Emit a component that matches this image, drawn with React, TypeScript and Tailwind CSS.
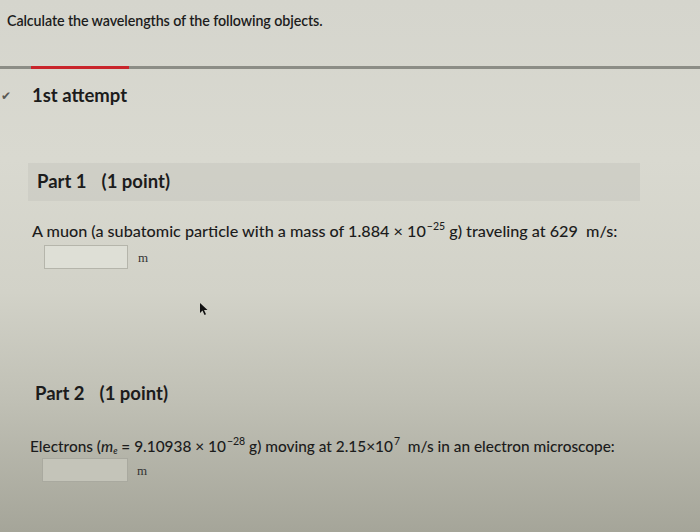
import React from "react";

function Sup({ children }: { children: React.ReactNode }) {
  return <sup className="text-[10.5px] relative -top-[7px] align-baseline ml-[1px]">{children}</sup>;
}

export default function App() {
  return (
    <div
      className="w-[700px] h-[532px] overflow-hidden text-[#1c1c1c] bg-[linear-gradient(180deg,#d5d5cd_0%,#d9d9d0_30%,#d2d2c8_55%,#c0c0b5_75%,#a5a599_100%)]"
      style={{ fontFamily: "Lato, 'Open Sans', sans-serif" }}
    >
      <div className="pl-[7px] pt-[10px] text-[14.3px] font-semibold tracking-[-0.1px]">
        Calculate the wavelengths of the following objects.
      </div>

      <div className="mt-[35px] flex h-[3px] w-full bg-[#8c8d86]">
        <div className="ml-[31px] w-[98px] bg-[#c9252b]" />
      </div>

      <div className="mt-[13px] flex items-center">
        <span className="w-[32px] text-[12px] text-[#5a5a55] pl-[1px]">✔</span>
        <span className="text-[18.5px] font-bold">1st attempt</span>
      </div>

      <div className="mt-[53px] ml-[28px] mr-[60px] h-[38px] flex items-center pl-[9px] bg-[#c6c6be]/50 text-[18.5px] font-bold">
        <span>Part 1</span>
        <span className="ml-[15px]">(1 point)</span>
      </div>

      <div className="mt-[18px] pl-[32px] text-[16.2px] font-medium whitespace-nowrap">
        A muon (a subatomic particle with a mass of 1.884 × 10<Sup>−25</Sup> g) traveling at 629 &nbsp;m/s:
      </div>
      <div className="mt-[2px] ml-[44px] flex items-center">
        <div className="w-[84px] h-[24px] border border-[#b5b5ab] bg-[#dedfd6]" />
        <span className="ml-[10px] text-[13px] text-[#333]" style={{ fontFamily: "'Liberation Serif', serif" }}>m</span>
      </div>

      <div className="relative h-[111px]">
        <svg className="absolute left-[199px] top-[33px]" width="10" height="14" viewBox="0 0 10 14">
          <path d="M1 1 L1 11 L3.5 8.5 L5.5 13 L7 12.3 L5 8 L8.5 8 Z" fill="#111" />
        </svg>
      </div>

      <div className="ml-[35px] flex items-center text-[18.5px] font-bold">
        <span>Part 2</span>
        <span className="ml-[15px]">(1 point)</span>
      </div>

      <div className="mt-[27px] pl-[30px] text-[15.4px] font-medium whitespace-nowrap">
        Electrons (<i>m</i>
        <sub className="text-[9px] italic">e</sub> = 9.10938 × 10<Sup>−28</Sup> g) moving at 2.15×10<Sup>7</Sup> &nbsp;m/s in an electron microscope:
      </div>
      <div className="mt-[0px] ml-[42px] flex items-center">
        <div className="w-[86px] h-[24px] border border-[#a9a99f] bg-[#c4c4b9]" />
        <span className="ml-[9px] text-[13px] text-[#333]" style={{ fontFamily: "'Liberation Serif', serif" }}>m</span>
      </div>
    </div>
  );
}
